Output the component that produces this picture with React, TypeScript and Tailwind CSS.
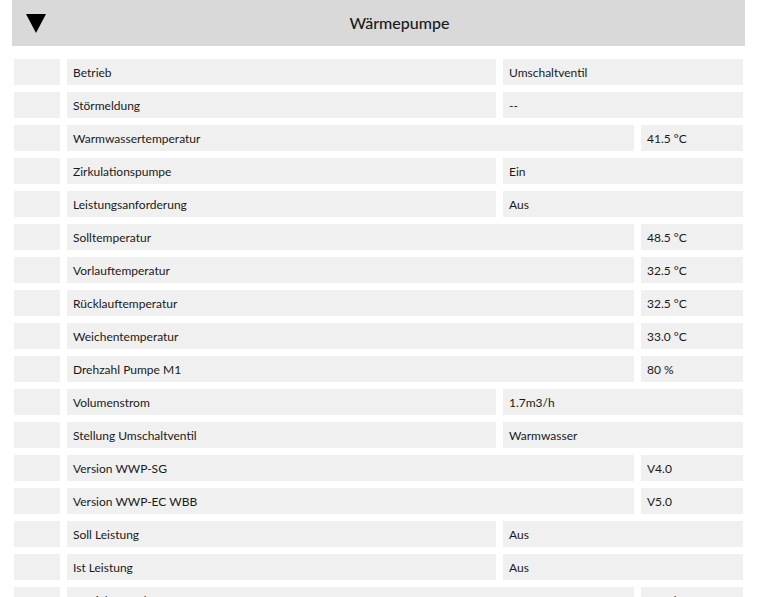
import React from 'react';

type Row = { label: string; value: string; wide?: boolean };

const rows: Row[] = [
  { label: 'Betrieb', value: 'Umschaltventil', wide: true },
  { label: 'Störmeldung', value: '--', wide: true },
  { label: 'Warmwassertemperatur', value: '41.5 °C' },
  { label: 'Zirkulationspumpe', value: 'Ein', wide: true },
  { label: 'Leistungsanforderung', value: 'Aus', wide: true },
  { label: 'Solltemperatur', value: '48.5 °C' },
  { label: 'Vorlauftemperatur', value: '32.5 °C' },
  { label: 'Rücklauftemperatur', value: '32.5 °C' },
  { label: 'Weichentemperatur', value: '33.0 °C' },
  { label: 'Drehzahl Pumpe M1', value: '80 %' },
  { label: 'Volumenstrom', value: '1.7m3/h', wide: true },
  { label: 'Stellung Umschaltventil', value: 'Warmwasser', wide: true },
  { label: 'Version WWP-SG', value: 'V4.0' },
  { label: 'Version WWP-EC WBB', value: 'V5.0' },
  { label: 'Soll Leistung', value: 'Aus', wide: true },
  { label: 'Ist Leistung', value: 'Aus', wide: true },
  { label: 'Betriebsstunden WP Stufe 1', value: '13.0 h' },
];

export default function App() {
  return (
    <div className="min-h-screen bg-white text-[#1a1a1a]" style={{ fontFamily: 'Lato, "Noto Sans", sans-serif' }}>
      <div className="ml-[12px] w-[733px]">
        {/* Section header */}
        <div className="relative flex h-[46px] items-center justify-center bg-[#d9d9d9] pl-[42px]">
          <svg className="absolute left-[14px] top-[14px]" width="20" height="19" viewBox="0 0 20 19">
            <polygon points="0,0 20,0 10,19" fill="#000" />
          </svg>
          <span className="text-[16px] font-medium">Wärmepumpe</span>
        </div>

        <div className="mt-[13px] flex flex-col gap-[7px] px-[2px]">
          {rows.map((r) => (
            <div key={r.label} className="flex h-[26px] gap-[7px] text-[12px]">
              <div className="w-[46px] bg-[#f0f0f0]" />
              <div className="flex flex-1 items-center bg-[#f0f0f0] pl-[6px] pt-[2px]">{r.label}</div>
              <div className={(r.wide ? 'w-[240px]' : 'w-[102px]') + ' flex items-center bg-[#f0f0f0] pl-[6px] pt-[2px]'}>
                {r.value}
              </div>
            </div>
          ))}
        </div>
      </div>
    </div>
  );
}
